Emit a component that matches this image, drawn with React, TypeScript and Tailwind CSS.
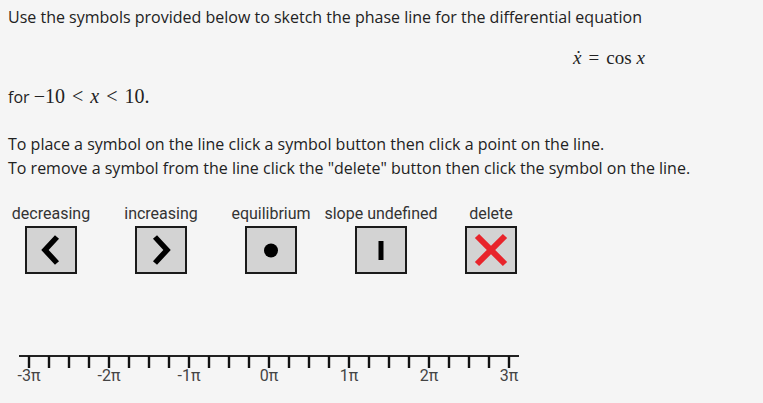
import React from 'react';

type Tool = {
  label: string;
  icon: React.ReactNode;
};

const tools: Array<Tool> = [
  {
    label: 'decreasing',
    icon: (
      <svg width="48" height="44" viewBox="0 0 48 44">
        <polyline points="30,9 18,22 30,35" fill="none" stroke="#000" strokeWidth="5.5" />
      </svg>
    ),
  },
  {
    label: 'increasing',
    icon: (
      <svg width="48" height="44" viewBox="0 0 48 44">
        <polyline points="18,9 30,22 18,35" fill="none" stroke="#000" strokeWidth="5.5" />
      </svg>
    ),
  },
  {
    label: 'equilibrium',
    icon: (
      <svg width="48" height="44" viewBox="0 0 48 44">
        <circle cx="24" cy="22.5" r="7" fill="#000" />
      </svg>
    ),
  },
  {
    label: 'slope undefined',
    icon: (
      <svg width="48" height="44" viewBox="0 0 48 44">
        <rect x="21.5" y="13" width="5" height="19" fill="#000" />
      </svg>
    ),
  },
  {
    label: 'delete',
    icon: (
      <svg width="48" height="44" viewBox="0 0 48 44">
        <path d="M10,8 L38,36 M38,8 L10,36" stroke="#e8242b" strokeWidth="6" />
      </svg>
    ),
  },
];

function ToolButton(props: Tool) {
  return (
    <div className="flex w-[52px] flex-col items-center">
      <div className="whitespace-nowrap font-['Roboto',sans-serif] text-[16px] leading-[20px] text-[#333]">
        {props.label}
      </div>
      <button className="mt-[2px] flex h-[48px] w-[52px] items-center justify-center border-2 border-[#1a1a1a] bg-[#d3d3d3]">
        {props.icon}
      </button>
    </div>
  );
}

function PhaseLine() {
  const ticks = Array.from({length: 25}, (_, i) => i);
  return (
    <svg width="763" height="60" viewBox="0 0 763 60" className="block">
      <line x1="19" y1="15" x2="519" y2="15" stroke="#222" strokeWidth="2" />
      {ticks.map((i) => (
        <line
          key={i}
          x1={29 + i * 20}
          y1="15"
          x2={29 + i * 20}
          y2="27"
          stroke="#111"
          strokeWidth="2.4"
        />
      ))}
      {[-3, -2, -1, 0, 1, 2, 3].map((n, i) => (
        <text
          key={n}
          x={29 + i * 80}
          y="40"
          textAnchor="middle"
          fontFamily="Roboto, sans-serif"
          fontSize="16"
          fill="#444"
        >
          {n}π
        </text>
      ))}
    </svg>
  );
}

export default function App() {
  return (
    <div className="min-h-screen bg-[#f5f5f5] text-[#222]">
      <div className="px-2 pt-[5px] font-['Open_Sans',sans-serif] text-[16px] leading-6">
        <p>Use the symbols provided below to sketch the phase line for the differential equation</p>
        <div className="mt-[8px] flex h-[40px] w-[637px] items-center justify-end pt-[2px] font-['Liberation_Serif',serif] text-[19px]">
          <span className="italic">ẋ</span>
          <span className="mx-[7px]">=</span>
          <span>cos</span>
          <span className="ml-[5px] italic">x</span>
        </div>
        <p className="mt-[7px]">
          for{' '}
          <span className="font-['Liberation_Serif',serif] text-[20px]">
            −10<span className="mx-[7px]">&lt;</span>
            <span className="italic">x</span>
            <span className="mx-[7px]">&lt;</span>10.
          </span>
        </p>
        <p className="mt-[23px]">To place a symbol on the line click a symbol button then click a point on the line.</p>
        <p>To remove a symbol from the line click the "delete" button then click the symbol on the line.</p>
      </div>
      <div className="mt-[24px] flex gap-[58px] pl-[25px]">
        {tools.map((t) => (
          <ToolButton key={t.label} label={t.label} icon={t.icon} />
        ))}
      </div>
      <div className="mt-[67px]">
        <PhaseLine />
      </div>
    </div>
  );
}
